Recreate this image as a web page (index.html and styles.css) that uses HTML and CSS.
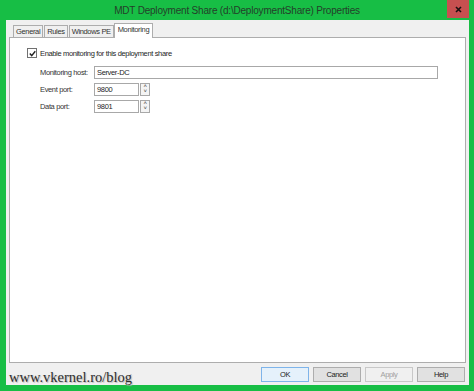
FILE: index.html
```html
<!DOCTYPE html>
<html lang="en">
<head>
    <meta charset="UTF-8">
    <title>MDT Deployment Share Properties</title>
    <link rel="stylesheet" href="styles.css">
</head>
<body>
    <div class="window">
        <div class="titlebar">
            <span></span>
            <span class="title">MDT Deployment Share (d:\DeploymentShare) Properties</span>
            <span class="close">
                <svg width="7" height="7" viewBox="0 0 7 7"><path d="M1 1L6 6M6 1L1 6" stroke="#1a1010" stroke-width="1.6"/></svg>
            </span>
        </div>
        <div class="client">
            <div class="tabs">
                <div class="tab">General</div>
                <div class="tab">Rules</div>
                <div class="tab">Windows PE</div>
                <div class="tab active">Monitoring</div>
            </div>
            <div class="panel">
                <div class="check-row">
                    <span class="checkbox">
                        <svg width="7" height="7" viewBox="0 0 7 7"><path d="M0.8 3.6L2.7 5.6L6.3 1.2" fill="none" stroke="#222" stroke-width="1.4"/></svg>
                    </span>
                    <span>Enable monitoring for this deployment share</span>
                </div>
                <div class="fields">
                    <div class="field">
                        <label>Monitoring host:</label>
                        <div class="textbox wide">Server-DC</div>
                    </div>
                    <div class="field">
                        <label>Event port:</label>
                        <div class="textbox port">9800</div>
                        <div class="spin"><span>&#708;</span><span>&#709;</span></div>
                    </div>
                    <div class="field">
                        <label>Data port:</label>
                        <div class="textbox port">9801</div>
                        <div class="spin"><span>&#708;</span><span>&#709;</span></div>
                    </div>
                </div>
            </div>
            <div class="footer">
                <span class="watermark">www.vkernel.ro/blog</span>
                <div class="buttons">
                    <div class="btn default">OK</div>
                    <div class="btn">Cancel</div>
                    <div class="btn disabled">Apply</div>
                    <div class="btn">Help</div>
                </div>
            </div>
        </div>
    </div>
</body>
</html>
```

FILE: styles.css
```css
body {
    margin: 0;
    background: #17be45;
    font-family: "Liberation Sans", Arial, sans-serif;
    font-size: 7.5px;
    letter-spacing: -0.35px;
    color: #1e1e1e;
}
.window {
    width: 474px;
    height: 391px;
    display: flex;
    flex-direction: column;
    background: #17be45;
}
.titlebar {
    height: 20px;
    display: grid;
    grid-template-columns: 1fr auto 1fr;
    align-items: center;
}
.title {
    font-size: 10px;
    letter-spacing: -0.2px;
    color: #24402a;
    padding-top: 1px;
    white-space: nowrap;
}
.close {
    justify-self: end;
    align-self: start;
    width: 22px;
    height: 18px;
    margin-right: 5px;
    background: #c75050;
    display: flex;
    align-items: center;
    justify-content: center;
}
.client {
    flex: 1;
    margin: 0 5px 6px 6px;
    background: #f0f0f0;
    display: flex;
    flex-direction: column;
    padding: 0 3px 0 3px;
}
.tabs {
    display: flex;
    height: 17px;
    align-items: flex-end;
    padding-left: 4px;
    gap: 1px;
}
.tab {
    height: 11px;
    padding: 0 2px;
    line-height: 11px;
    border: 1px solid #adadad;
    border-bottom: none;
    background: #f0f0f0;
    color: #333;
    white-space: nowrap;
}
.tab.active {
    height: 14px;
    line-height: 12px;
    background: #fff;
    margin-bottom: -1px;
    margin-left: -1px;
    position: relative;
    padding: 0 3px;
}
.panel {
    flex: 1;
    background: #fff;
    border: 1px solid #adadad;
    padding: 10px 0 0 17px;
}
.check-row {
    display: flex;
    align-items: center;
    gap: 3px;
    height: 10px;
}
.checkbox {
    width: 8px;
    height: 8px;
    border: 1px solid #707070;
    display: flex;
    align-items: center;
    justify-content: center;
}
.fields {
    margin-top: 8px;
    padding-left: 13px;
    display: flex;
    flex-direction: column;
    gap: 4px;
}
.field {
    display: flex;
    align-items: center;
    height: 13px;
}
.field label {
    width: 54px;
    color: #333;
    white-space: nowrap;
}
.textbox {
    height: 11px;
    line-height: 11px;
    border: 1px solid #a8a8a8;
    padding-left: 2px;
    background: #fff;
}
.textbox.wide {
    width: 340px;
}
.textbox.port {
    width: 41px;
}
.spin {
    width: 8px;
    height: 11px;
    border: 1px solid #a8a8a8;
    margin-left: 1px;
    display: flex;
    flex-direction: column;
    align-items: center;
    font-size: 6px;
    line-height: 5px;
    color: #333;
    background: #f4f4f4;
}
.footer {
    height: 22px;
    display: flex;
    align-items: center;
    justify-content: space-between;
}
.watermark {
    font-family: "Liberation Serif", "Times New Roman", serif;
    font-size: 14.5px;
    letter-spacing: 0;
    color: #2e2e2e;
    text-shadow: 1px 1px 1px #bbb;
    margin-top: 6px;
}
.buttons {
    display: flex;
    gap: 4px;
    margin-right: 1px;
}
.btn {
    width: 46px;
    height: 13px;
    line-height: 13px;
    text-align: center;
    border: 1px solid #adadad;
    background: #e1e1e1;
    color: #222;
}
.btn.default {
    border-color: #7eb4ea;
    background: #e5f1fb;
}
.btn.disabled {
    color: #a0a0a0;
    border-color: #c8c8c8;
    background: #f0f0f0;
}
```
